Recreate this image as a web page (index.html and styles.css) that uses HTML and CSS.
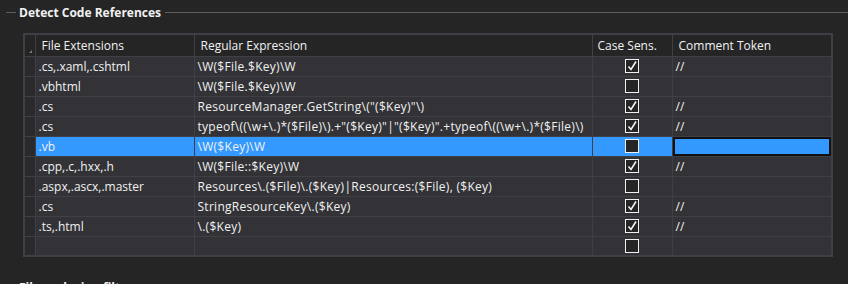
FILE: index.html
```html
<!DOCTYPE html>
<html lang="en">
<head>
  <meta charset="UTF-8">
  <meta name="viewport" content="width=device-width, initial-scale=1.0">
  <title>Detect Code References</title>
  <link rel="stylesheet" href="styles.css">
</head>
<body>
  <div class="group">
    <div class="group-title">
      <span class="rule short"></span>
      <span class="title">Detect Code References</span>
      <span class="rule"></span>
    </div>

    <table class="grid">
      <colgroup>
        <col class="c-head">
        <col class="c-ext">
        <col class="c-regex">
        <col class="c-case">
        <col class="c-token">
      </colgroup>
      <thead>
        <tr>
          <th class="corner"><span class="corner-mark"></span></th>
          <th>File Extensions</th>
          <th>Regular Expression</th>
          <th>Case Sens.</th>
          <th>Comment Token</th>
        </tr>
      </thead>
      <tbody>
        <tr>
          <th class="rowhead"></th>
          <td>.cs,.xaml,.cshtml</td>
          <td class="regex">\W($File.$Key)\W</td>
          <td class="check"><span class="box on"><svg viewBox="0 0 12 12"><polyline points="2.5,6.5 5,9.5 10,1.5"/></svg></span></td>
          <td>//</td>
        </tr>
        <tr>
          <th class="rowhead"></th>
          <td>.vbhtml</td>
          <td class="regex">\W($File.$Key)\W</td>
          <td class="check"><span class="box"></span></td>
          <td></td>
        </tr>
        <tr>
          <th class="rowhead"></th>
          <td>.cs</td>
          <td class="regex">ResourceManager.GetString\("($Key)"\)</td>
          <td class="check"><span class="box on"><svg viewBox="0 0 12 12"><polyline points="2.5,6.5 5,9.5 10,1.5"/></svg></span></td>
          <td>//</td>
        </tr>
        <tr>
          <th class="rowhead"></th>
          <td>.cs</td>
          <td class="regex">typeof\((\w+\.)*($File)\).+"($Key)"|"($Key)".+typeof\((\w+\.)*($File)\)</td>
          <td class="check"><span class="box on"><svg viewBox="0 0 12 12"><polyline points="2.5,6.5 5,9.5 10,1.5"/></svg></span></td>
          <td>//</td>
        </tr>
        <tr class="selected">
          <th class="rowhead"></th>
          <td>.vb</td>
          <td class="regex">\W($Key)\W</td>
          <td class="check"><span class="box"></span></td>
          <td class="editing"><span class="editor"></span></td>
        </tr>
        <tr>
          <th class="rowhead"></th>
          <td>.cpp,.c,.hxx,.h</td>
          <td class="regex">\W($File::$Key)\W</td>
          <td class="check"><span class="box on"><svg viewBox="0 0 12 12"><polyline points="2.5,6.5 5,9.5 10,1.5"/></svg></span></td>
          <td>//</td>
        </tr>
        <tr>
          <th class="rowhead"></th>
          <td>.aspx,.ascx,.master</td>
          <td class="regex">Resources\.($File)\.($Key)|Resources:($File), ($Key)</td>
          <td class="check"><span class="box"></span></td>
          <td></td>
        </tr>
        <tr>
          <th class="rowhead"></th>
          <td>.cs</td>
          <td class="regex">StringResourceKey\.($Key)</td>
          <td class="check"><span class="box on"><svg viewBox="0 0 12 12"><polyline points="2.5,6.5 5,9.5 10,1.5"/></svg></span></td>
          <td>//</td>
        </tr>
        <tr>
          <th class="rowhead"></th>
          <td>.ts,.html</td>
          <td class="regex">\.($Key)</td>
          <td class="check"><span class="box on"><svg viewBox="0 0 12 12"><polyline points="2.5,6.5 5,9.5 10,1.5"/></svg></span></td>
          <td>//</td>
        </tr>
        <tr>
          <th class="rowhead"></th>
          <td></td>
          <td></td>
          <td class="check"><span class="box"></span></td>
          <td></td>
        </tr>
      </tbody>
    </table>
  </div>

  <div class="group">
    <div class="group-title next">
      <span class="title">File exclusion filter</span>
    </div>
  </div>
</body>
</html>
```

FILE: styles.css
```css
* {
  box-sizing: border-box;
}

html, body {
  height: 100%;
}

body {
  margin: 0;
  background-color: #252526;
  color: #f1f1f1;
  font-family: "Open Sans", "Noto Sans", sans-serif;
  font-size: 12px;
  overflow: hidden;
}

.group-title {
  display: flex;
  align-items: center;
  height: 24px;
  padding-left: 6px;
}

.group-title .title {
  font-weight: bold;
  padding: 0 4px 0 3px;
  white-space: nowrap;
  line-height: 16px;
  margin-top: 1px;
}

.rule {
  flex: 1;
  height: 1px;
  background-color: #5f5f63;
}

.rule.short {
  flex: 0 0 10px;
}

.group-title.next {
  margin-top: 18px;
  padding-left: 16px;
}

.grid {
  margin: 9px 0 0 23px;
  width: 809px;
  table-layout: fixed;
  border-collapse: collapse;
  border: 2px solid #3f3f46;
}

.c-head { width: 11px; }
.c-ext { width: 159px; }
.c-regex { width: 398px; }
.c-case { width: 80px; }
.c-token { width: 160px; }

th, td {
  border: 1px solid #3f3f46;
  padding: 0 3px;
  white-space: nowrap;
  overflow: hidden;
  text-align: left;
  font-weight: normal;
}

thead th {
  height: 22px;
  background-color: #252526;
  padding: 0 6px;
}

thead th:nth-child(4) {
  padding-left: 5px;
}

.corner {
  position: relative;
  padding: 0;
}

.corner-mark {
  position: absolute;
  right: 3px;
  bottom: 3px;
  width: 0;
  height: 0;
  border-left: 3px solid transparent;
  border-bottom: 3px solid #7a7a7a;
}

tbody tr {
  height: 20px;
}

tbody td {
  background-color: #333337;
  line-height: 18px;
  padding-top: 1px;
}

tbody td.regex {
  letter-spacing: 0.28px;
}

.rowhead {
  background-color: #2a2a2c;
  padding: 0;
}

.check {
  text-align: center;
  padding: 0;
}

.box {
  display: inline-block;
  width: 14px;
  height: 14px;
  border: 1px solid #f1f1f1;
  background-color: #252526;
  vertical-align: middle;
  margin-top: -2px;
}

.box svg {
  display: block;
  width: 12px;
  height: 12px;
}

.box polyline {
  fill: none;
  stroke: #f1f1f1;
  stroke-width: 1.6;
}

.selected td {
  background-color: #3399ff;
}

.selected .box {
  background-color: #252526;
}

.editing {
  padding: 0;
}

.editor {
  display: block;
  height: 19px;
  border: 2px solid #111111;
  background-color: #3399ff;
}
```
